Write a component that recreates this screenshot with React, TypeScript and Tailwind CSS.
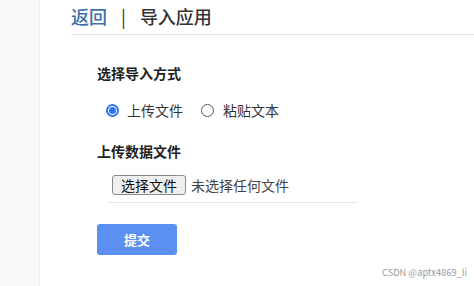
export default function App() {
  return (
    <div
      className="relative flex h-[286px] w-[474px] overflow-hidden bg-white text-[#333]"
      style={{ fontFamily: '"Noto Sans CJK SC", "Liberation Sans", sans-serif' }}
    >
      {/* sidebar strip */}
      <div className="w-[40px] shrink-0 border-r border-[#ececec] bg-[#f8f8f8]" />

      <div className="flex-1 pl-[31px]">
        {/* header */}
        <div className="flex h-[35px] items-center border-b border-[#e4e4e4] pb-[3px] text-[18px] font-medium leading-none">
          <span className="text-[#3d6fa8]">返回</span>
          <span className="mx-[14px] font-normal text-[#333]">|</span>
          <span className="text-[#333]">导入应用</span>
        </div>

        <div className="pl-[26px] pt-[29px]">
          <div className="text-[14px] font-bold leading-[18px] text-[#222]">选择导入方式</div>

          <div className="mt-[19px] flex items-center pl-[9px] text-[14px] leading-[18px]">
            <label className="flex items-center">
              <span className="flex h-[13px] w-[13px] items-center justify-center rounded-full border-2 border-[#2f74e8] bg-white">
                <span className="h-[7px] w-[7px] rounded-full bg-[#2f74e8]" />
              </span>
              <span className="ml-[8px]">上传文件</span>
            </label>
            <label className="ml-[18px] flex items-center">
              <span className="h-[13px] w-[13px] rounded-full border border-[#555] bg-white" />
              <span className="ml-[9px]">粘贴文本</span>
            </label>
          </div>

          <div className="mt-[23px] text-[14px] font-bold leading-[18px] text-[#222]">上传数据文件</div>

          <div className="mt-[15px] ml-[10px] flex w-[251px] items-center border-b border-[#e6e6e6] pb-[7px] pl-[5px]">
            <span className="flex h-[20px] items-center rounded-[3px] border border-[#8a8a8a] bg-[#efefef] px-[8px] text-[14px] leading-none text-[#111]">
              选择文件
            </span>
            <span className="ml-[5px] text-[14px] leading-none text-[#444]">未选择任何文件</span>
          </div>

          <button className="mt-[21px] flex h-[31px] w-[80px] items-center justify-center rounded-[3px] bg-[#5b8ff2] text-[13px] font-bold text-white">
            提交
          </button>
        </div>
      </div>

      <div className="absolute bottom-[9px] right-[7px] text-[9.3px] leading-none text-[#9a9a9a]">CSDN @aptx4869_li</div>
    </div>
  );
}
